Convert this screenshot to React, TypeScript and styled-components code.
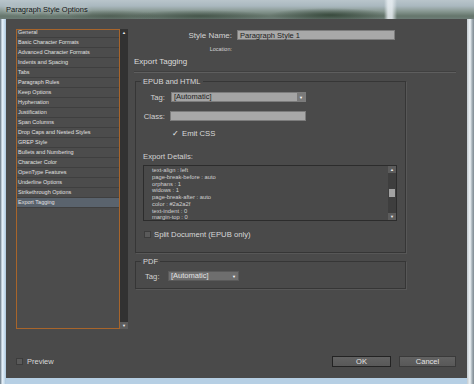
import styled, { createGlobalStyle } from 'styled-components';

const GlobalStyle = createGlobalStyle`
  html, body {
    margin: 0;
    padding: 0;
    background: #b6cfe4;
  }
  body {
    font-family: 'Liberation Sans', Arial, sans-serif;
  }
  * {
    box-sizing: border-box;
  }
`;

const Window = styled.div`
  width: 474px;
  height: 384px;
  display: flex;
  flex-direction: column;
  padding-bottom: 6px;
  overflow: hidden;
  background: linear-gradient(
    to right,
    #6f7f8c 0,
    #8b9aa6 1px,
    #e9f3fb 2px,
    #cfe2f1 4px,
    #a9c4da 6px,
    #b6cfe4 6px,
    #b6cfe4 467px,
    #c3cbd0 467px,
    #eef3f6 470px,
    #a7b2b9 472px,
    #7d8890 474px
  );
`;

const TitleBar = styled.div`
  height: 19px;
  flex: none;
  display: flex;
  align-items: center;
  padding-left: 6px;
  background:
    linear-gradient(to right, transparent 384px, rgba(232, 238, 242, 0.85) 388px, rgba(232, 238, 242, 0.85) 392px, transparent 397px),
    radial-gradient(ellipse 60px 7px at 330px 15px, rgba(40, 58, 44, 0.75), transparent),
    radial-gradient(ellipse 70px 6px at 200px 16px, rgba(48, 64, 52, 0.6), transparent),
    radial-gradient(ellipse 50px 6px at 110px 16px, rgba(60, 74, 62, 0.5), transparent),
    linear-gradient(to bottom, #b9c5cb 0, #aab8bf 6px, #8a9a94 11px, #65766c 16px, #6d7c76 19px);
`;

const Title = styled.span`
  font-size: 7.5px;
  color: #101418;
  text-shadow: 0 0 5px rgba(255, 255, 255, 0.9);
  white-space: nowrap;
`;

const DialogBody = styled.div`
  flex: 1;
  margin: 0 7px 0 6px;
  padding: 10px 11px 11px 10px;
  display: flex;
  flex-direction: column;
  background: #4a4a4a;
  color: #d4d4d4;
`;

const Main = styled.div`
  flex: 1;
  display: flex;
  gap: 6px;
  min-height: 0;
`;

const SidePanel = styled.div`
  display: flex;
  width: 112px;
  height: 300px;
  flex: none;
`;

const ListBox = styled.div`
  width: 104px;
  height: 300px;
  border: 1px solid #a8652b;
  background: #4c4c4c;
  overflow: hidden;
`;

const ListInner = styled.div`
  margin-top: -2px;
`;

const ListItem = styled.div<{ $selected?: boolean }>`
  height: 10px;
  line-height: 9px;
  padding-left: 1px;
  font-size: 5.5px;
  color: #e0e0e0;
  white-space: nowrap;
  border-bottom: 1px solid #3f3f3f;
  background: ${(p) => (p.$selected ? '#5a636d' : 'transparent')};
`;

const ScrollTrack = styled.div<{ $light?: boolean }>`
  width: 8px;
  flex: none;
  display: flex;
  flex-direction: column;
  justify-content: space-between;
  background: ${(p) => (p.$light ? '#3e3e3e' : '#323232')};
`;

const ScrollArrow = styled.div<{ $boxed?: boolean }>`
  height: 7px;
  display: flex;
  align-items: center;
  justify-content: center;
  background: ${(p) => (p.$boxed ? '#5c5c5c' : 'transparent')};
  color: #f0f0f0;
  font-size: 4px;
  line-height: 1;
`;

const Thumb = styled.div`
  width: 6px;
  height: 8px;
  margin: 0 auto;
  background: #a2a2a2;
`;

const RightCol = styled.div`
  width: 322px;
  display: flex;
  flex-direction: column;
`;

const NameRow = styled.div`
  display: flex;
  align-items: center;
  gap: 5px;
  height: 10px;
  margin-top: 1px;
`;

const RightLabel = styled.span<{ $size?: number }>`
  width: 98px;
  text-align: right;
  font-size: ${(p) => p.$size ?? 8}px;
  color: #d4d4d4;
  white-space: nowrap;
`;

const TextInput = styled.div<{ $width: number }>`
  width: ${(p) => p.$width}px;
  height: 10px;
  line-height: 9px;
  padding-left: 2px;
  font-size: 7.5px;
  color: #1c1c1c;
  background: #a8a8a8;
  border: 1px solid #7c7c7c;
  white-space: nowrap;
`;

const LocationRow = styled.div`
  display: flex;
  height: 7px;
  margin-top: 5px;
  align-items: center;
`;

const SectionTitle = styled.div`
  margin-top: 5px;
  height: 10px;
  line-height: 10px;
  font-size: 8px;
  color: #dcdcdc;
`;

const Rule = styled.div`
  margin-top: 4px;
  height: 2px;
  border-top: 1px solid #404040;
  border-bottom: 1px solid #5e5e5e;
`;

const Group = styled.fieldset<{ $pt: number; $pb: number }>`
  margin: 4px 0 0 1px;
  width: 271px;
  padding: ${(p) => p.$pt}px 0 ${(p) => p.$pb}px 0;
  border: 1px solid #363636;
  box-shadow: 1px 1px 0 #575757;
  min-width: 0;
`;

const Legend = styled.legend`
  margin-left: 5px;
  padding: 0 2px;
  font-size: 7.5px;
  line-height: 9px;
  color: #d8d8d8;
`;

const FormRow = styled.div<{ $gap?: number; $mt?: number }>`
  display: flex;
  align-items: center;
  gap: ${(p) => p.$gap ?? 6}px;
  height: 10px;
  margin-top: ${(p) => p.$mt ?? 0}px;
`;

const FieldLabel = styled.span<{ $width: number; $align?: string }>`
  width: ${(p) => p.$width}px;
  text-align: ${(p) => p.$align ?? 'right'};
  padding-left: ${(p) => (p.$align === 'left' ? 9 : 0)}px;
  font-size: 7.7px;
  color: #d2d2d2;
  white-space: nowrap;
`;

const Select = styled.div<{ $width: number; $dark?: boolean }>`
  width: ${(p) => p.$width}px;
  height: 10px;
  display: flex;
  border: 1px solid ${(p) => (p.$dark ? '#5a5a5a' : '#7c7c7c')};
  background: ${(p) => (p.$dark ? '#6e6e6e' : '#a4a4a4')};
  color: ${(p) => (p.$dark ? '#e2e2e2' : '#1c1c1c')};
`;

const SelectValue = styled.span`
  flex: 1;
  padding-left: 2px;
  line-height: 8px;
  font-size: 7.5px;
  white-space: nowrap;
`;

const SelectArrow = styled.span<{ $dark?: boolean }>`
  width: 8px;
  display: flex;
  align-items: center;
  justify-content: center;
  font-size: 4px;
  color: #ffffff;
  background: ${(p) => (p.$dark ? '#6e6e6e' : '#7a7a7a')};
`;

const CheckRow = styled.div<{ $indent: number; $mt: number }>`
  display: flex;
  align-items: center;
  gap: 3px;
  height: 9px;
  margin-top: ${(p) => p.$mt}px;
  padding-left: ${(p) => p.$indent}px;
  font-size: 7.7px;
  color: #d8d8d8;
  white-space: nowrap;
`;

const CheckMark = styled.span`
  font-size: 8px;
  color: #f0f0f0;
`;

const Box = styled.span`
  width: 7px;
  height: 7px;
  flex: none;
  background: #5a5a5a;
  border: 1px solid #3c3c3c;
`;

const SubLabel = styled.div`
  margin-top: 14px;
  padding-left: 7px;
  height: 9px;
  line-height: 9px;
  font-size: 7.7px;
  color: #d2d2d2;
`;

const DetailsBox = styled.div`
  margin: 4px 0 0 7px;
  width: 254px;
  height: 56px;
  display: flex;
  border: 1px solid #2c2c2c;
  background: #494949;
`;

const DetailsLines = styled.div`
  flex: 1;
  padding: 1px 0 0 8px;
  overflow: hidden;
`;

const DetailLine = styled.div`
  height: 6.75px;
  line-height: 6.75px;
  font-size: 5.8px;
  color: #d0d0d0;
  white-space: nowrap;
`;

const Footer = styled.div`
  height: 11px;
  display: flex;
  align-items: center;
  justify-content: space-between;
`;

const PreviewToggle = styled.div`
  display: flex;
  align-items: center;
  gap: 4px;
  font-size: 7.5px;
  color: #d8d8d8;
`;

const Buttons = styled.div`
  display: flex;
  gap: 8px;
`;

const Button = styled.button<{ $width: number; $primary?: boolean }>`
  width: ${(p) => p.$width}px;
  height: 11px;
  padding: 0;
  font-family: inherit;
  font-size: 7.5px;
  line-height: 9px;
  color: #e4e4e4;
  background: linear-gradient(#626262, #585858);
  border: 1px solid ${(p) => (p.$primary ? '#232323' : '#3a3a3a')};
`;

const styles = [
  'General',
  'Basic Character Formats',
  'Advanced Character Formats',
  'Indents and Spacing',
  'Tabs',
  'Paragraph Rules',
  'Keep Options',
  'Hyphenation',
  'Justification',
  'Span Columns',
  'Drop Caps and Nested Styles',
  'GREP Style',
  'Bullets and Numbering',
  'Character Color',
  'OpenType Features',
  'Underline Options',
  'Strikethrough Options',
  'Export Tagging',
];

const details = [
  'text-align : left',
  'page-break-before : auto',
  'orphans : 1',
  'widows : 1',
  'page-break-after : auto',
  'color : #2a2a2f',
  'text-indent : 0',
  'margin-top : 0',
];

function App() {
  return (
    <Window>
      <GlobalStyle />
      <TitleBar>
        <Title>Paragraph Style Options</Title>
      </TitleBar>
      <DialogBody>
        <Main>
          <SidePanel>
            <ListBox>
              <ListInner>
                {styles.map((s) => (
                  <ListItem key={s} $selected={s === 'Export Tagging'}>{s}</ListItem>
                ))}
              </ListInner>
            </ListBox>
            <ScrollTrack>
              <ScrollArrow>▲</ScrollArrow>
              <ScrollArrow $boxed>▼</ScrollArrow>
            </ScrollTrack>
          </SidePanel>

          <RightCol>
            <NameRow>
              <RightLabel>Style Name:</RightLabel>
              <TextInput $width={158}>Paragraph Style 1</TextInput>
            </NameRow>
            <LocationRow>
              <RightLabel $size={5.5}>Location:</RightLabel>
            </LocationRow>
            <SectionTitle>Export Tagging</SectionTitle>
            <Rule />

            <Group $pt={6} $pb={13}>
              <Legend>EPUB and HTML</Legend>
              <FormRow>
                <FieldLabel $width={29}>Tag:</FieldLabel>
                <Select $width={135}>
                  <SelectValue>[Automatic]</SelectValue>
                  <SelectArrow>▼</SelectArrow>
                </Select>
              </FormRow>
              <FormRow $mt={9} $gap={5}>
                <FieldLabel $width={29}>Class:</FieldLabel>
                <TextInput $width={136} />
              </FormRow>
              <CheckRow $indent={36} $mt={8}>
                <CheckMark>✓</CheckMark>
                Emit CSS
              </CheckRow>
              <SubLabel>Export Details:</SubLabel>
              <DetailsBox>
                <DetailsLines>
                  {details.map((d) => (
                    <DetailLine key={d}>{d}</DetailLine>
                  ))}
                </DetailsLines>
                <ScrollTrack $light>
                  <ScrollArrow $boxed>▲</ScrollArrow>
                  <Thumb />
                  <ScrollArrow $boxed>▼</ScrollArrow>
                </ScrollTrack>
              </DetailsBox>
              <CheckRow $indent={8} $mt={9}>
                <Box />
                Split Document (EPUB only)
              </CheckRow>
            </Group>

            <Group $pt={5} $pb={7}>
              <Legend>PDF</Legend>
              <FormRow $gap={8}>
                <FieldLabel $width={24} $align="left">Tag:</FieldLabel>
                <Select $width={71} $dark>
                  <SelectValue>[Automatic]</SelectValue>
                  <SelectArrow $dark>▼</SelectArrow>
                </Select>
              </FormRow>
            </Group>
          </RightCol>
        </Main>

        <Footer>
          <PreviewToggle>
            <Box />
            Preview
          </PreviewToggle>
          <Buttons>
            <Button $width={59} $primary>OK</Button>
            <Button $width={57}>Cancel</Button>
          </Buttons>
        </Footer>
      </DialogBody>
    </Window>
  );
}

export default App;
